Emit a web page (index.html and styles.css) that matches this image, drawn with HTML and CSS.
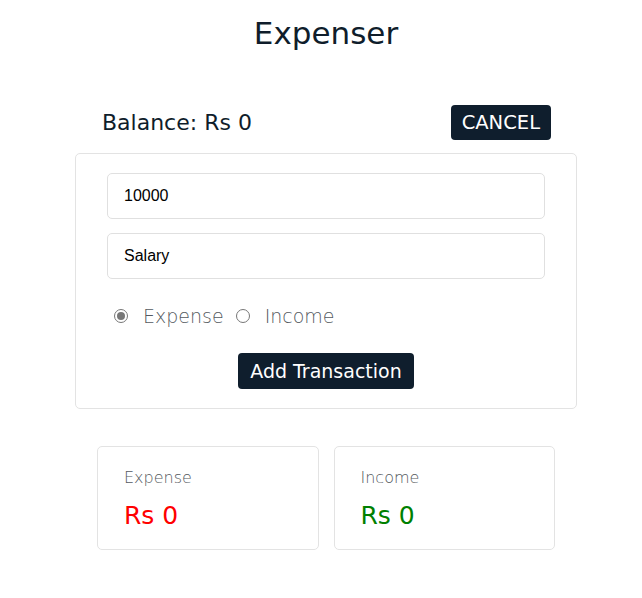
FILE: index.html
```html
<!DOCTYPE html>
<html lang="en">
<head>
<meta charset="utf-8">
<title>Expenser</title>
<link rel="stylesheet" href="styles.css">
</head>
<body>
<div class="app">
  <h1 class="title">Expenser</h1>
  <div class="balance-row">
    <span class="balance">Balance: Rs 0</span>
    <button class="btn btn-cancel">CANCEL</button>
  </div>
  <form class="form-card">
    <input class="field" type="text" value="10000">
    <input class="field" type="text" value="Salary">
    <div class="radios">
      <label class="radio-item"><input type="radio" name="type" checked><span>Expense</span></label>
      <label class="radio-item"><input type="radio" name="type"><span>Income</span></label>
    </div>
    <div class="actions"><button type="button" class="btn btn-add">Add Transaction</button></div>
  </form>
  <div class="summary">
    <div class="sum-card">
      <div class="sum-label">Expense</div>
      <div class="sum-value expense">Rs 0</div>
    </div>
    <div class="sum-card">
      <div class="sum-label">Income</div>
      <div class="sum-value income">Rs 0</div>
    </div>
  </div>
</div>
</body>
</html>
```
FILE: styles.css
```css
* { box-sizing: border-box; }
html, body { margin: 0; background: #fff; }
body {
  padding-left: 10px;
  font-family: "DejaVu Sans", "Noto Sans", sans-serif;
  color: #0f1d2b;
}
.app {
  width: 502px;
  margin: 0 auto;
  display: flex;
  flex-direction: column;
}
.title {
  margin: 14px 0 0;
  text-align: center;
  font-size: 31px;
  font-weight: 400;
  line-height: 38px;
  color: #0f1d2b;
}
.balance-row {
  margin: 53px 26px 0 27px;
  display: flex;
  justify-content: space-between;
  align-items: center;
}
.balance {
  font-size: 22px;
  font-weight: 400;
}
.btn {
  font-family: inherit;
  background: #0f1e2d;
  color: #fff;
  border: none;
  border-radius: 4px;
  cursor: pointer;
}
.btn-cancel {
  height: 35px;
  padding: 0 11px;
  font-size: 19.5px;
}
.form-card {
  margin: 13px 0 0;
  border: 1px solid #e3e3e3;
  border-radius: 5px;
  padding: 19px 31px 19px 31px;
  display: flex;
  flex-direction: column;
  gap: 14px;
}
.field {
  height: 46px;
  width: 100%;
  border: 1px solid #e0e0e0;
  border-radius: 5px;
  padding: 0 16px;
  font-family: "Liberation Sans", Arial, sans-serif;
  font-size: 16px;
  color: #000;
  outline: none;
}
.radios {
  display: flex;
  align-items: center;
  height: 46px;
  padding-left: 7px;
  gap: 12px;
}
.radio-item {
  display: flex;
  align-items: center;
  gap: 15px;
  font-size: 19px;
  font-weight: 300;
  color: #555a60;
}
.radio-item input {
  appearance: none;
  -webkit-appearance: none;
  margin: 0;
  width: 14px;
  height: 14px;
  border: 1px solid #777;
  border-radius: 50%;
  display: grid;
  place-items: center;
}
.radio-item input:checked::after {
  content: "";
  width: 8px;
  height: 8px;
  border-radius: 50%;
  background: #777;
}
.actions {
  display: flex;
  justify-content: center;
}
.btn-add {
  height: 36px;
  padding: 0 12px;
  font-size: 19px;
  font-weight: 500;
}
.summary {
  margin: 37px 22px 0 22px;
  display: grid;
  grid-template-columns: 1fr 1fr;
  gap: 15px;
}
.sum-card {
  height: 104px;
  border: 1px solid #e3e3e3;
  border-radius: 5px;
  padding: 20px 26px;
}
.sum-label {
  font-size: 16px;
  font-weight: 300;
  color: #555a60;
  line-height: 22px;
}
.sum-value {
  margin-top: 11px;
  font-size: 25px;
  line-height: 32px;
}
.expense { color: #ff0000; }
.income { color: #008000; }
```
